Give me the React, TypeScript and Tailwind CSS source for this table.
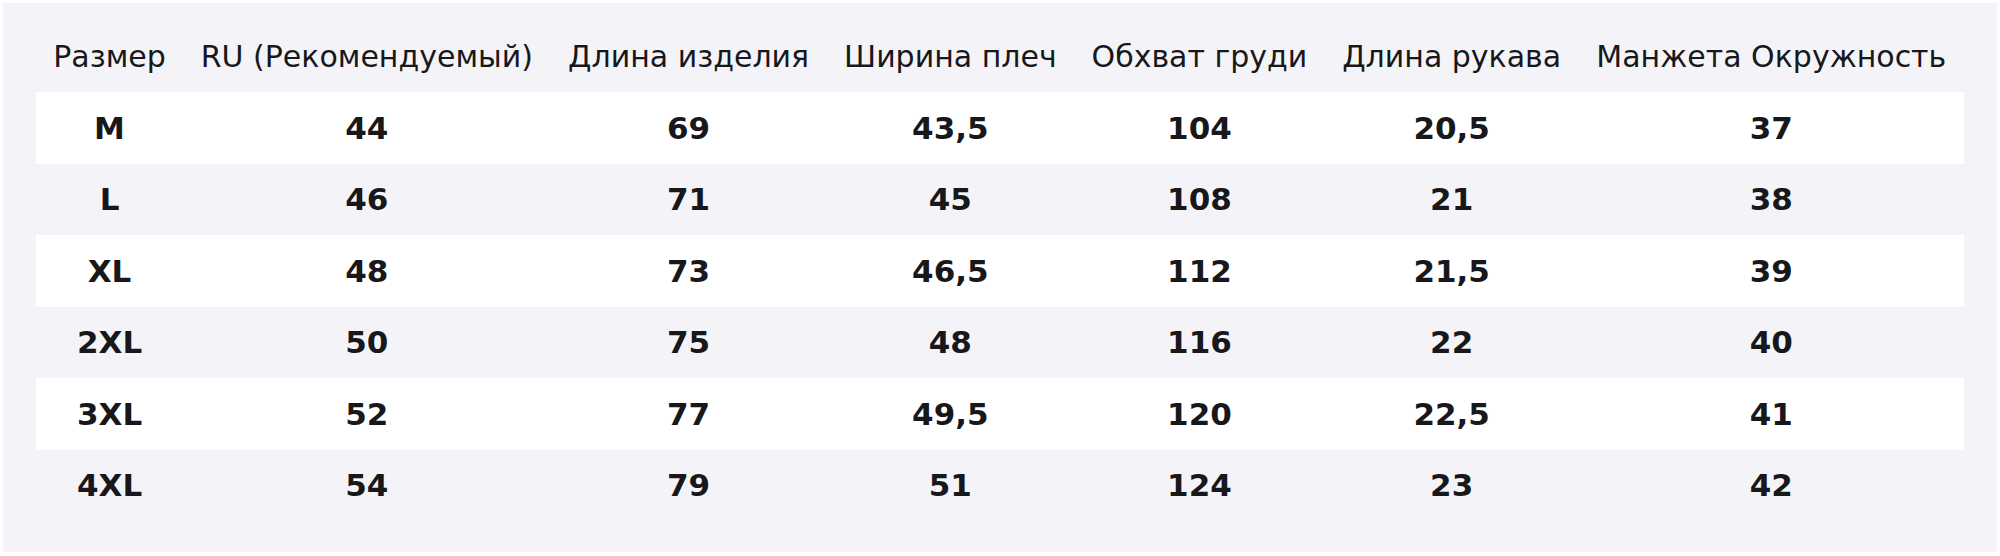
const headers = [
  'Размер',
  'RU (Рекомендуемый)',
  'Длина изделия',
  'Ширина плеч',
  'Обхват груди',
  'Длина рукава',
  'Манжета Окружность',
]

const rows = [
  ['M', '44', '69', '43,5', '104', '20,5', '37'],
  ['L', '46', '71', '45', '108', '21', '38'],
  ['XL', '48', '73', '46,5', '112', '21,5', '39'],
  ['2XL', '50', '75', '48', '116', '22', '40'],
  ['3XL', '52', '77', '49,5', '120', '22,5', '41'],
  ['4XL', '54', '79', '51', '124', '23', '42'],
]

export default function App() {
  return (
    <div className="w-[2000px] h-[556px] bg-white p-[3px] font-['DejaVu_Sans',sans-serif] text-[#18181b]">
      <div className="h-[549px] bg-[#f4f4f8] px-[33px] pt-[17px] pb-[34px]">
        <table className="w-full table-auto border-collapse">
          <thead>
            <tr className="h-[72px]">
              {headers.map((h) => (
                <th
                  key={h}
                  className="px-[17px] text-center align-middle text-[30px] font-normal whitespace-nowrap"
                >
                  {h}
                </th>
              ))}
            </tr>
          </thead>
          <tbody>
            {rows.map((row, i) => (
              <tr
                key={row[0]}
                className={i % 2 === 0 ? 'h-[71.5px] bg-white' : 'h-[71.5px] bg-transparent'}
              >
                {row.map((cell, j) => (
                  <td
                    key={j}
                    className="px-[17px] text-center align-middle text-[31px] font-bold whitespace-nowrap"
                  >
                    {cell}
                  </td>
                ))}
              </tr>
            ))}
          </tbody>
        </table>
      </div>
    </div>
  )
}
